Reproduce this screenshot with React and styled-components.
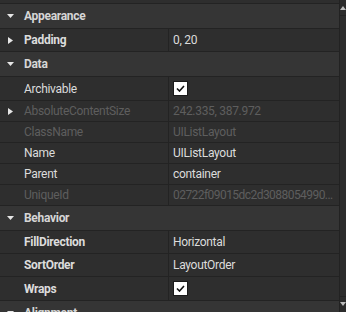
import React from "react";
import styled, { createGlobalStyle } from "styled-components";

const Global = createGlobalStyle`
  html, body { margin: 0; padding: 0; background: #2e2e2e; }
  body { font-family: Roboto, "Noto Sans", sans-serif; letter-spacing: -0.3px; }
`;

const Panel = styled.div`
  width: 346px;
  height: 312px;
  display: flex;
  overflow: hidden;
  background: #2e2e2e;
`;

const List = styled.div`
  flex: 1;
  min-width: 0;
  display: flex;
  flex-direction: column;
  border-right: 1px solid #222;
`;

const Stub = styled.div`
  height: 3px;
  flex: none;
  border-bottom: 1px solid #232323;
  background: #2e2e2e;
`;

const Header = styled.div`
  height: 24px;
  flex: none;
  display: flex;
  align-items: center;
  background: #353535;
  border-bottom: 1px solid #232323;
  color: #d6d6d6;
  font-weight: 700;
  font-size: 12px;
`;

const Row = styled.div`
  height: ${(p) => p.$h}px;
  flex: none;
  display: flex;
  align-items: stretch;
  background: #2e2e2e;
  border-bottom: 1px solid #232323;
  font-size: 12px;
`;

const NameCell = styled.div`
  width: 168px;
  flex: none;
  display: flex;
  align-items: center;
  border-right: 1px solid #232323;
  color: ${(p) => (p.$dim ? "#5e5e5e" : "#dcdcdc")};
  font-weight: ${(p) => (p.$bold ? 700 : 400)};
  white-space: nowrap;
`;

const ValueCell = styled.div`
  flex: 1;
  min-width: 0;
  display: flex;
  align-items: center;
  padding-left: 4px;
  color: ${(p) => (p.$dim ? "#5e5e5e" : "#dcdcdc")};
  letter-spacing: ${(p) => (p.$tight ? "-0.55px" : "-0.3px")};
  white-space: nowrap;
  overflow: hidden;
`;

const Toggle = styled.span`
  width: 24px;
  flex: none;
  display: flex;
  align-items: center;
  padding-left: ${(p) => (p.$open ? 7 : 8)}px;
  box-sizing: border-box;
`;

const Label = styled.span``;

const Check = styled.span`
  width: 15px;
  height: 15px;
  box-sizing: border-box;
  background: #fff;
  border: 1px solid #1a1a1a;
  display: flex;
  align-items: center;
  justify-content: center;
`;

const Scroll = styled.div`
  width: 6px;
  flex: none;
  display: flex;
  flex-direction: column;
  justify-content: space-between;
  background: #2c2c2c;
`;

const Arrow = styled.div`
  height: 16px;
  display: flex;
  align-items: ${(p) => (p.$down ? "flex-end" : "flex-start")};
  padding: 6px 0;
  box-sizing: border-box;
  border-bottom: ${(p) => (p.$down ? "none" : "1px solid #242424")};
  border-top: ${(p) => (p.$down ? "1px solid #242424" : "none")};
`;

const Down = () => (
  <svg width="7" height="4" viewBox="0 0 7 4">
    <path d="M0 0H7L3.5 4Z" fill="#e6e6e6" />
  </svg>
);
const Right = () => (
  <svg width="5" height="7" viewBox="0 0 5 7">
    <path d="M0 0V7L5 3.5Z" fill="#e6e6e6" />
  </svg>
);

const Tick = () => (
  <svg width="9" height="7" viewBox="0 0 9 7">
    <path d="M1 3.5L3.5 6L8 1" fill="none" stroke="#111" strokeWidth="1.6" />
  </svg>
);

const Section = ({ title }) => (
  <Header>
    <Toggle $open>
      <Down />
    </Toggle>
    <Label>{title}</Label>
  </Header>
);

const Prop = ({ name, value, h = 23, bold, dim, expandable, check, tight }) => (
  <Row $h={h}>
    <NameCell $bold={bold} $dim={dim}>
      <Toggle>{expandable ? <Right /> : null}</Toggle>
      <Label>{name}</Label>
    </NameCell>
    <ValueCell $dim={dim} $tight={tight}>
      {check ? (
        <Check>
          <Tick />
        </Check>
      ) : (
        value
      )}
    </ValueCell>
  </Row>
);

export default function App() {
  return (
    <>
      <Global />
      <Panel>
        <List>
          <Stub />
          <Section title="Appearance" />
          <Prop name="Padding" value="0, 20" bold expandable h={22} />
          <Section title="Data" />
          <Prop name="Archivable" check h={23} />
          <Prop name="AbsoluteContentSize" value="242.335, 387.972" dim expandable h={20} />
          <Prop name="ClassName" value="UIListLayout" dim h={20} />
          <Prop name="Name" value="UIListLayout" h={20} />
          <Prop name="Parent" value="container" h={20} />
          <Prop name="UniqueId" value="02722f09015dc2d3088054990..." dim tight h={20} />
          <Section title="Behavior" />
          <Prop name="FillDirection" value="Horizontal" bold h={22} />
          <Prop name="SortOrder" value="LayoutOrder" bold h={22} />
          <Prop name="Wraps" check bold h={23} />
          <Section title="Alignment" />
        </List>
        <Scroll>
          <Arrow>
            <svg width="6" height="4" viewBox="0 0 6 4">
              <path d="M0 4H6L3 0Z" fill="#bdbdbd" />
            </svg>
          </Arrow>
          <Arrow $down>
            <svg width="6" height="4" viewBox="0 0 6 4">
              <path d="M0 0H6L3 4Z" fill="#bdbdbd" />
            </svg>
          </Arrow>
        </Scroll>
      </Panel>
    </>
  );
}
